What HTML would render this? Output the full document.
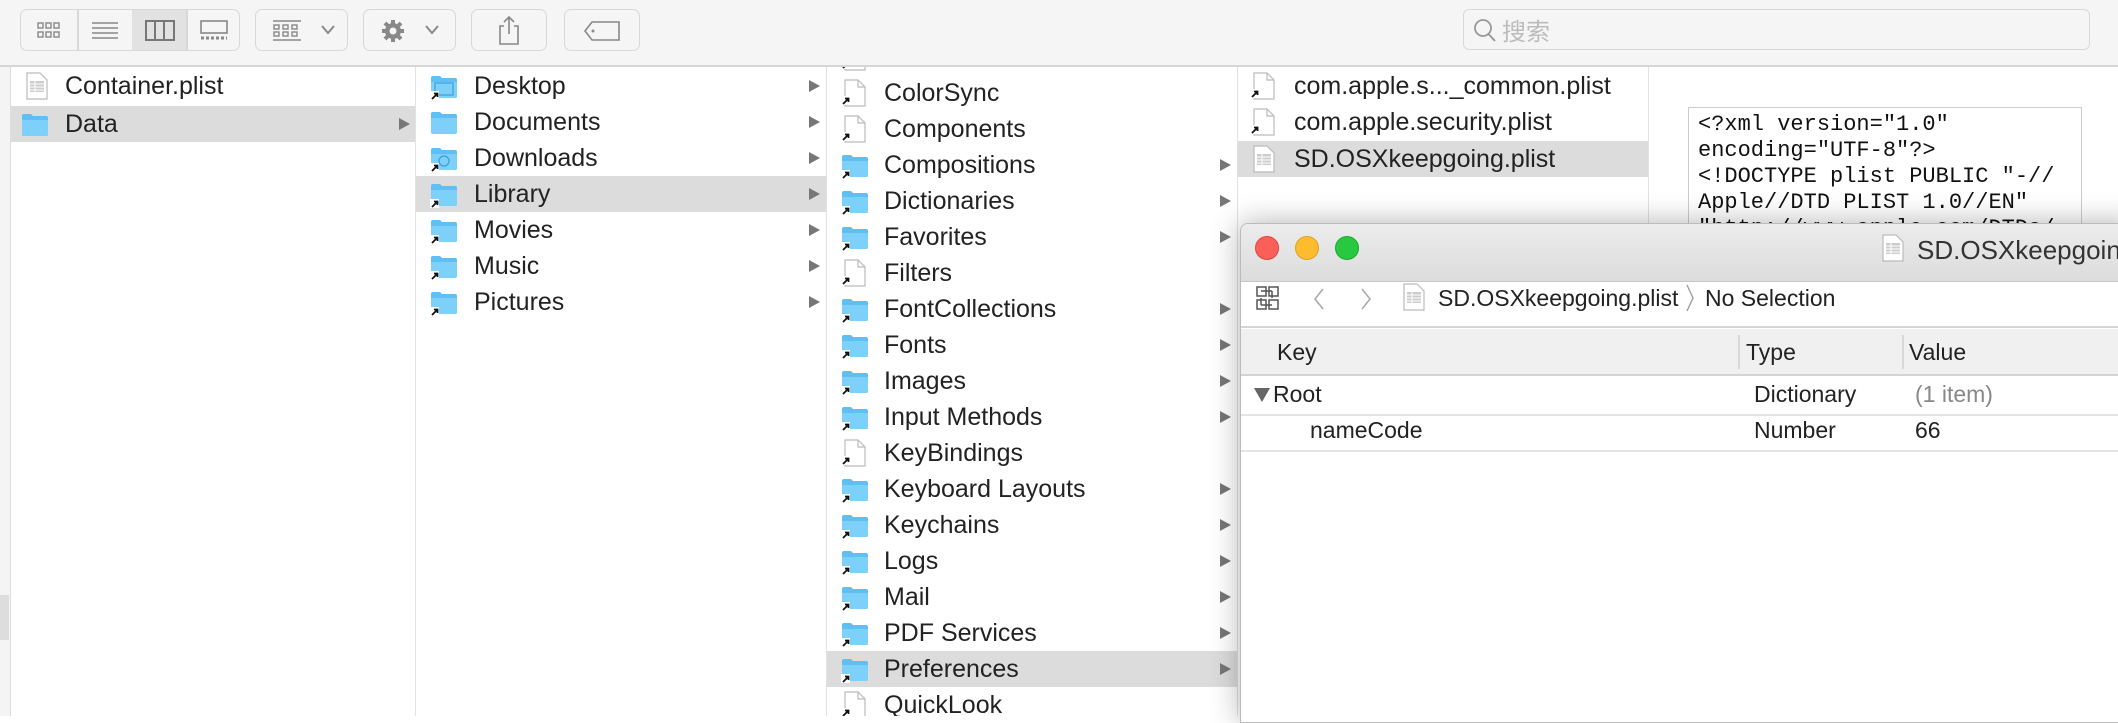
<!DOCTYPE html>
<html><head><meta charset="utf-8">
<style>
*{margin:0;padding:0;box-sizing:border-box}
body{width:2118px;height:716px;overflow:hidden;background:#fff;font-family:"Liberation Sans","Noto Sans CJK SC",sans-serif;color:#222;position:relative}
.tb{position:absolute;left:0;top:0;width:2118px;height:67px;background:#f5f5f5;border-bottom:2px solid #d6d6d6}
.btn{position:absolute;top:9px;height:42px;border:1.5px solid #d8d8d8;border-radius:7px;background:#f5f5f5}
.col{position:absolute;top:67px;height:649px;border-right:1.5px solid #e2e2e2;overflow:hidden}
.r{position:absolute;left:0;right:0;height:36px;font-size:25px;line-height:36px;white-space:nowrap}
.r.s{background:#dcdcdc}
.r svg.i{position:absolute;top:4px}
.r .t{position:absolute}
.ar{position:absolute;top:12px;width:0;height:0;border-left:11px solid #777;border-top:6.5px solid transparent;border-bottom:6.5px solid transparent}
.mono{font-family:"Liberation Mono","DejaVu Sans Mono",monospace;font-size:22px;line-height:26px;color:#111}
.w{position:absolute;font-size:23px}
</style></head><body>
<svg width="0" height="0" style="position:absolute">
<defs>
<g id="fo"><path d="M1 4 Q1 2 3 2 H10 L12 4 H25 Q27 4 27 6 V22 Q27 24 25 24 H3 Q1 24 1 22Z" fill="#5fbff3"/><path d="M1 8 H27 V22 Q27 24 25 24 H3 Q1 24 1 22Z" fill="#7dd0fa"/></g>
<g id="fi"><path d="M4 1 H17 L24 8 V27 H4Z" fill="#fff" stroke="#bbb" stroke-width="1.2"/><path d="M17 1 V8 H24" fill="none" stroke="#bbb" stroke-width="1.2"/></g>
<g id="pl"><path d="M4 1 H17 L24 8 V27 H4Z" fill="#fff" stroke="#bbb" stroke-width="1.2"/><rect x="7" y="9" width="14" height="11" fill="#ccc"/><path d="M7 12H21M7 15H21M7 18H21M12 9V20" stroke="#fff" stroke-width="1"/></g>
<g id="al"><rect x="0" y="17" width="9" height="9" fill="#fff"/><path d="M2 25 L7 20 M4 19.5 H7.5 V23" stroke="#111" stroke-width="1.8" fill="none"/></g>
</defs></svg>

<div class="tb">
 <div class="btn" style="left:20px;width:220px;overflow:hidden">
  <div style="position:absolute;left:56px;top:0;width:1.5px;height:40px;background:#d8d8d8"></div>
  <div style="position:absolute;left:111px;top:0;width:55px;height:40px;background:#e2e2e2"></div>
  <div style="position:absolute;left:165px;top:0;width:1.5px;height:40px;background:#d8d8d8"></div>
  <svg style="position:absolute;left:14px;top:8px" width="30" height="24"><g fill="none" stroke="#888" stroke-width="1.4"><rect x="3" y="5" width="5" height="5"/><rect x="11" y="5" width="5" height="5"/><rect x="19" y="5" width="5" height="5"/><rect x="3" y="14" width="5" height="5"/><rect x="11" y="14" width="5" height="5"/><rect x="19" y="14" width="5" height="5"/></g></svg>
  <svg style="position:absolute;left:68px;top:8px" width="32" height="24"><path d="M3 5H29M3 10H29M3 15H29M3 20H29" stroke="#888" stroke-width="1.6"/></svg>
  <svg style="position:absolute;left:122px;top:8px" width="34" height="24"><rect x="3" y="3" width="28" height="19" fill="none" stroke="#777" stroke-width="2"/><path d="M12 3V22M21 3V22" stroke="#777" stroke-width="2"/></svg>
  <svg style="position:absolute;left:176px;top:8px" width="34" height="24"><rect x="4" y="3" width="26" height="12" fill="none" stroke="#888" stroke-width="1.6"/><path d="M4 20H30" stroke="#888" stroke-width="3" stroke-dasharray="3 2"/></svg>
 </div>
 <div class="btn" style="left:255px;width:93px">
  <svg style="position:absolute;left:14px;top:8px" width="34" height="26"><path d="M3 3H31M3 22H31" stroke="#888" stroke-width="1.6"/><g fill="none" stroke="#888" stroke-width="1.4"><rect x="4" y="7" width="5" height="4"/><rect x="13" y="7" width="5" height="4"/><rect x="22" y="7" width="5" height="4"/><rect x="4" y="14" width="5" height="4"/><rect x="13" y="14" width="5" height="4"/><rect x="22" y="14" width="5" height="4"/></g></svg>
  <svg style="position:absolute;left:64px;top:13px" width="18" height="14"><path d="M2 3L8 10L14 3" fill="none" stroke="#888" stroke-width="2"/></svg>
 </div>
 <div class="btn" style="left:363px;width:93px">
  <svg style="position:absolute;left:16px;top:8px" width="26" height="26"><g fill="#888"><circle cx="13" cy="13" r="8"/><g stroke="#888" stroke-width="4"><path d="M13 2V24M2 13H24M5 5L21 21M21 5L5 21"/></g></g><circle cx="13" cy="13" r="3.5" fill="#f5f5f5"/></svg>
  <svg style="position:absolute;left:60px;top:13px" width="18" height="14"><path d="M2 3L8 10L14 3" fill="none" stroke="#888" stroke-width="2"/></svg>
 </div>
 <div class="btn" style="left:471px;width:76px">
  <svg style="position:absolute;left:24px;top:4px" width="26" height="32"><path d="M8 12H4V30H22V12H18M13 3V20M8 8L13 3L18 8" fill="none" stroke="#888" stroke-width="1.6"/></svg>
 </div>
 <div class="btn" style="left:564px;width:76px">
  <svg style="position:absolute;left:18px;top:10px" width="40" height="22"><path d="M9 2H36V20H9L2 11Z" fill="none" stroke="#888" stroke-width="1.6"/><circle cx="10" cy="11" r="1.5" fill="#888"/></svg>
 </div>
 <div class="btn" style="left:1463px;width:627px;height:41px;border-radius:6px">
  <svg style="position:absolute;left:8px;top:7px" width="28" height="28"><circle cx="11" cy="11" r="8" fill="none" stroke="#999" stroke-width="1.8"/><path d="M16.5 17L23 24" stroke="#999" stroke-width="2"/></svg>
  <span style="position:absolute;left:38px;top:6px;font-size:24px;color:#bbb;font-family:'Noto Sans CJK SC',sans-serif;line-height:27px">搜索</span>
 </div>
</div>

<div style="position:absolute;left:0;top:67px;width:11px;height:649px;background:#f4f4f4;border-right:1.5px solid #ddd"></div>
<div style="position:absolute;left:0;top:595px;width:9px;height:45px;background:#ddd"></div>

<div class="col" style="left:11px;width:405px">
 <div class="r" style="top:1px"><svg class="i" style="left:12px" width="30" height="30"><use href="#pl"/></svg><span class="t" style="left:54px">Container.plist</span></div>
 <div class="r s" style="top:39px"><svg class="i" style="left:10px;top:6px" width="30" height="30"><use href="#fo"/></svg><span class="t" style="left:54px">Data</span><div class="ar" style="left:388px"></div></div>
</div>

<div class="col" style="left:416px;width:411px">
 <div class="r" style="top:1px"><svg class="i" style="left:14px;top:6px" width="30" height="30"><use href="#fo"/><rect x="5" y="9" width="18" height="12" fill="none" stroke="#3f9fd9" stroke-width="1.2"/><use href="#al"/></svg><span class="t" style="left:58px">Desktop</span><div class="ar" style="left:393px"></div></div>
 <div class="r" style="top:37px"><svg class="i" style="left:14px;top:6px" width="30" height="30"><use href="#fo"/></svg><span class="t" style="left:58px">Documents</span><div class="ar" style="left:393px"></div></div>
 <div class="r" style="top:73px"><svg class="i" style="left:14px;top:6px" width="30" height="30"><use href="#fo"/><circle cx="14" cy="15" r="5" fill="none" stroke="#3f9fd9" stroke-width="1.3"/><use href="#al"/></svg><span class="t" style="left:58px">Downloads</span><div class="ar" style="left:393px"></div></div>
 <div class="r s" style="top:109px"><svg class="i" style="left:14px;top:6px" width="30" height="30"><use href="#fo"/><use href="#al"/></svg><span class="t" style="left:58px">Library</span><div class="ar" style="left:393px"></div></div>
 <div class="r" style="top:145px"><svg class="i" style="left:14px;top:6px" width="30" height="30"><use href="#fo"/><use href="#al"/></svg><span class="t" style="left:58px">Movies</span><div class="ar" style="left:393px"></div></div>
 <div class="r" style="top:181px"><svg class="i" style="left:14px;top:6px" width="30" height="30"><use href="#fo"/><use href="#al"/></svg><span class="t" style="left:58px">Music</span><div class="ar" style="left:393px"></div></div>
 <div class="r" style="top:217px"><svg class="i" style="left:14px;top:6px" width="30" height="30"><use href="#fo"/><use href="#al"/></svg><span class="t" style="left:58px">Pictures</span><div class="ar" style="left:393px"></div></div>
</div>

<div class="col" style="left:827px;width:411px">
 <div class="r" style="top:-28px"><svg class="i" style="left:14px" width="30" height="30"><use href="#fi"/><use href="#al"/></svg></div>
 <div class="r" style="top:8px"><svg class="i" style="left:14px" width="30" height="30"><use href="#fi"/><use href="#al"/></svg><span class="t" style="left:57px">ColorSync</span></div>
 <div class="r" style="top:44px"><svg class="i" style="left:14px" width="30" height="30"><use href="#fi"/><use href="#al"/></svg><span class="t" style="left:57px">Components</span></div>
 <div class="r" style="top:80px"><svg class="i" style="left:14px;top:6px" width="30" height="30"><use href="#fo"/><use href="#al"/></svg><span class="t" style="left:57px">Compositions</span><div class="ar" style="left:393px"></div></div>
 <div class="r" style="top:116px"><svg class="i" style="left:14px;top:6px" width="30" height="30"><use href="#fo"/><use href="#al"/></svg><span class="t" style="left:57px">Dictionaries</span><div class="ar" style="left:393px"></div></div>
 <div class="r" style="top:152px"><svg class="i" style="left:14px;top:6px" width="30" height="30"><use href="#fo"/><use href="#al"/></svg><span class="t" style="left:57px">Favorites</span><div class="ar" style="left:393px"></div></div>
 <div class="r" style="top:188px"><svg class="i" style="left:14px" width="30" height="30"><use href="#fi"/><use href="#al"/></svg><span class="t" style="left:57px">Filters</span></div>
 <div class="r" style="top:224px"><svg class="i" style="left:14px;top:6px" width="30" height="30"><use href="#fo"/><use href="#al"/></svg><span class="t" style="left:57px">FontCollections</span><div class="ar" style="left:393px"></div></div>
 <div class="r" style="top:260px"><svg class="i" style="left:14px;top:6px" width="30" height="30"><use href="#fo"/><use href="#al"/></svg><span class="t" style="left:57px">Fonts</span><div class="ar" style="left:393px"></div></div>
 <div class="r" style="top:296px"><svg class="i" style="left:14px;top:6px" width="30" height="30"><use href="#fo"/><use href="#al"/></svg><span class="t" style="left:57px">Images</span><div class="ar" style="left:393px"></div></div>
 <div class="r" style="top:332px"><svg class="i" style="left:14px;top:6px" width="30" height="30"><use href="#fo"/><use href="#al"/></svg><span class="t" style="left:57px">Input Methods</span><div class="ar" style="left:393px"></div></div>
 <div class="r" style="top:368px"><svg class="i" style="left:14px" width="30" height="30"><use href="#fi"/><use href="#al"/></svg><span class="t" style="left:57px">KeyBindings</span></div>
 <div class="r" style="top:404px"><svg class="i" style="left:14px;top:6px" width="30" height="30"><use href="#fo"/><use href="#al"/></svg><span class="t" style="left:57px">Keyboard Layouts</span><div class="ar" style="left:393px"></div></div>
 <div class="r" style="top:440px"><svg class="i" style="left:14px;top:6px" width="30" height="30"><use href="#fo"/><use href="#al"/></svg><span class="t" style="left:57px">Keychains</span><div class="ar" style="left:393px"></div></div>
 <div class="r" style="top:476px"><svg class="i" style="left:14px;top:6px" width="30" height="30"><use href="#fo"/><use href="#al"/></svg><span class="t" style="left:57px">Logs</span><div class="ar" style="left:393px"></div></div>
 <div class="r" style="top:512px"><svg class="i" style="left:14px;top:6px" width="30" height="30"><use href="#fo"/><use href="#al"/></svg><span class="t" style="left:57px">Mail</span><div class="ar" style="left:393px"></div></div>
 <div class="r" style="top:548px"><svg class="i" style="left:14px;top:6px" width="30" height="30"><use href="#fo"/><use href="#al"/></svg><span class="t" style="left:57px">PDF Services</span><div class="ar" style="left:393px"></div></div>
 <div class="r s" style="top:584px"><svg class="i" style="left:14px;top:6px" width="30" height="30"><use href="#fo"/><use href="#al"/></svg><span class="t" style="left:57px">Preferences</span><div class="ar" style="left:393px"></div></div>
 <div class="r" style="top:620px"><svg class="i" style="left:14px" width="30" height="30"><use href="#fi"/><use href="#al"/></svg><span class="t" style="left:57px">QuickLook</span></div>
</div>

<div class="col" style="left:1238px;width:411px">
 <div class="r" style="top:1px"><svg class="i" style="left:12px" width="30" height="30"><use href="#fi"/><use href="#al"/></svg><span class="t" style="left:56px">com.apple.s..._common.plist</span></div>
 <div class="r" style="top:37px"><svg class="i" style="left:12px" width="30" height="30"><use href="#fi"/><use href="#al"/></svg><span class="t" style="left:56px">com.apple.security.plist</span></div>
 <div class="r s" style="top:74px"><svg class="i" style="left:12px" width="30" height="30"><use href="#pl"/></svg><span class="t" style="left:56px">SD.OSXkeepgoing.plist</span></div>
</div>

<div style="position:absolute;left:1688px;top:107px;width:394px;height:200px;border:1.5px solid #ccc;background:#fff;padding:4px 0 0 9px;white-space:nowrap;overflow:hidden" class="mono">&lt;?xml version="1.0"<br>encoding="UTF-8"?&gt;<br>&lt;!DOCTYPE plist PUBLIC "-//<br>Apple//DTD PLIST 1.0//EN"<br>"http://www.apple.com/DTDs/</div>

<div style="position:absolute;left:1240px;top:223px;width:900px;height:500px;background:#fff;border:1px solid #bbb;border-radius:8px 0 0 0;box-shadow:0 0 30px rgba(0,0,0,.3);overflow:hidden">
 <div style="position:absolute;left:0;top:0;right:0;height:58px;background:linear-gradient(#ececec,#dcdcdc);border-bottom:1.5px solid #c8c8c8"></div>
 <div style="position:absolute;left:14px;top:12px;width:24px;height:24px;border-radius:50%;background:#fc5f57;border:1px solid #e0443e"></div>
 <div style="position:absolute;left:54px;top:12px;width:24px;height:24px;border-radius:50%;background:#fdbc2e;border:1px solid #dea123"></div>
 <div style="position:absolute;left:94px;top:12px;width:24px;height:24px;border-radius:50%;background:#28c840;border:1px solid #1aab29"></div>
 <svg style="position:absolute;left:638px;top:10px" width="30" height="30"><use href="#pl"/></svg>
 <div style="position:absolute;left:676px;top:11px;font-size:26px;color:#333">SD.OSXkeepgoing.plist</div>
 <div style="position:absolute;left:0;top:59px;right:0;height:45px;background:#fff;border-bottom:2px solid #d4d4d4"></div>
 <svg style="position:absolute;left:14px;top:61px" width="26" height="28"><g fill="none" stroke="#555" stroke-width="1.5"><rect x="2" y="2" width="9" height="9"/><rect x="14" y="2" width="9" height="9"/><rect x="2" y="15" width="9" height="9"/><rect x="14" y="15" width="9" height="9"/><path d="M6 6H17M6 20H17M17 6V13M6 13V20"/></g></svg>
 <svg style="position:absolute;left:68px;top:62px" width="20" height="26"><path d="M14 3L6 13L14 23" fill="none" stroke="#aaa" stroke-width="1.6"/></svg>
 <svg style="position:absolute;left:115px;top:62px" width="20" height="26"><path d="M6 3L14 13L6 23" fill="none" stroke="#aaa" stroke-width="1.6"/></svg>
 <svg style="position:absolute;left:159px;top:59px" width="30" height="30"><use href="#pl"/></svg>
 <div class="w" style="left:197px;top:61px;color:#222">SD.OSXkeepgoing.plist</div>
 <svg style="position:absolute;left:443px;top:58px" width="12" height="32"><path d="M3 3L9 16L3 29" fill="none" stroke="#999" stroke-width="1.3"/></svg>
 <div class="w" style="left:464px;top:61px;color:#222">No Selection</div>
 <div style="position:absolute;left:0;top:105px;right:0;height:47px;background:#f0f0f0;border-bottom:2px solid #d4d4d4"></div>
 <div style="position:absolute;left:497px;top:111px;width:1.5px;height:34px;background:#d8d8d8"></div>
 <div style="position:absolute;left:661px;top:111px;width:1.5px;height:34px;background:#d8d8d8"></div>
 <div class="w" style="left:36px;top:115px">Key</div>
 <div class="w" style="left:505px;top:115px">Type</div>
 <div class="w" style="left:668px;top:115px">Value</div>
 <div style="position:absolute;left:0;top:190px;right:0;height:2px;background:#e4e4e4"></div>
 <div style="position:absolute;left:0;top:226px;right:0;height:2px;background:#e4e4e4"></div>
 <svg style="position:absolute;left:12px;top:162px" width="18" height="18"><path d="M1 2H17L9 16Z" fill="#666"/></svg>
 <div class="w" style="left:32px;top:157px">Root</div>
 <div class="w" style="left:513px;top:157px">Dictionary</div>
 <div class="w" style="left:674px;top:157px;color:#888">(1 item)</div>
 <div class="w" style="left:69px;top:193px">nameCode</div>
 <div class="w" style="left:513px;top:193px">Number</div>
 <div class="w" style="left:674px;top:193px">66</div>
</div>
</body></html>
